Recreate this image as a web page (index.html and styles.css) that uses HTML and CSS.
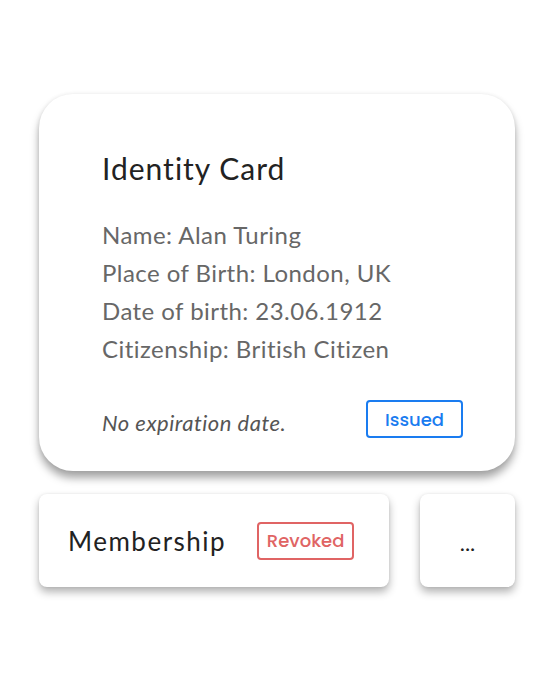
FILE: index.html
```html
<!DOCTYPE html>
<html>
<head>
<meta charset="utf-8">
<link rel="stylesheet" href="styles.css">
</head>
<body>
<div class="stack">
  <div class="card main">
    <h1 class="title">Identity Card</h1>
    <div class="fields">
      <div class="field">Name: Alan Turing</div>
      <div class="field">Place of Birth: London, UK</div>
      <div class="field">Date of birth: 23.06.1912</div>
      <div class="field">Citizenship: British Citizen</div>
    </div>
    <div class="footer">
      <span class="expiry">No expiration date.</span>
      <span class="badge issued">Issued</span>
    </div>
  </div>
  <div class="row">
    <div class="card small member">
      <span class="name">Membership</span>
      <span class="badge revoked">Revoked</span>
    </div>
    <div class="card small more">...</div>
  </div>
</div>
</body>
</html>
```
FILE: styles.css
```css
html, body {
  margin: 0;
  padding: 0;
  background: #fff;
}
body {
  font-family: Lato, "Open Sans", sans-serif;
  width: 554px;
  height: 678px;
}
.stack {
  padding: 94px 0 0 39px;
  width: 476px;
  display: flex;
  flex-direction: column;
  gap: 23px;
}
.card {
  background: #fff;
  box-sizing: border-box;
}
.main {
  height: 377px;
  border-radius: 34px;
  box-shadow: 0 7px 9px rgba(0,0,0,0.35), 0 0 4px rgba(0,0,0,0.08);
  padding: 52px 52px 0 63px;
  display: flex;
  flex-direction: column;
}
.title {
  margin: 0;
  font-weight: 400;
  font-size: 30px;
  letter-spacing: 1px;
  line-height: 44px;
  color: #222;
}
.fields {
  margin-top: 26px;
  display: flex;
  flex-direction: column;
}
.field {
  font-size: 24px;
  letter-spacing: 0.45px;
  line-height: 38px;
  color: #676767;
}
.footer {
  margin-top: 32px;
  display: flex;
  align-items: center;
  justify-content: space-between;
}
.expiry {
  font-style: italic;
  font-size: 22px;
  letter-spacing: 0.5px;
  color: #555;
  padding-top: 6px;
}
.badge {
  font-family: Poppins, "Noto Sans", sans-serif;
  box-sizing: border-box;
  display: inline-flex;
  align-items: center;
  justify-content: center;
  width: 97px;
  height: 38px;
  border: 2px solid;
  border-radius: 4px;
  font-size: 18px;
  font-weight: 500;
}
.issued {
  color: #1a7cf0;
  border-color: #1a7cf0;
}
.revoked {
  color: #e06464;
  border-color: #e06464;
}
.row {
  display: flex;
  gap: 31px;
}
.small {
  height: 93px;
  border-radius: 8px;
  box-shadow: 0 5px 8px rgba(0,0,0,0.3), 0 0 3px rgba(0,0,0,0.08);
  display: flex;
  align-items: center;
}
.member {
  width: 350px;
  padding-left: 29px;
  gap: 31px;
}
.name {
  font-size: 26px;
  letter-spacing: 1.5px;
  color: #222;
}
.more {
  width: 95px;
  justify-content: center;
  font-size: 22px;
  color: #222;
  padding-top: 4px;
}
```
